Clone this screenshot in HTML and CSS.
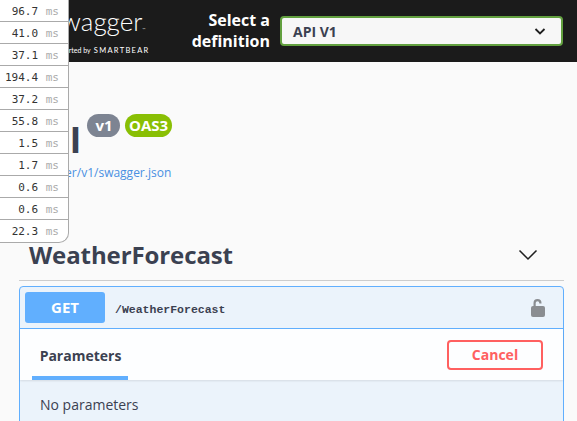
FILE: index.html
```html
<!DOCTYPE html>
<html lang="en">
<head>
<meta charset="utf-8">
<title>Swagger UI</title>
<link rel="stylesheet" href="styles.css">
</head>
<body>
<header class="topbar">
  <div class="brand">
    <div class="brand-name">swagger<span class="tm">™</span></div>
    <div class="brand-sub"><span class="by">supported by</span> SMARTBEAR</div>
  </div>
  <label class="picker">
    <span class="picker-label">Select a definition</span>
    <span class="select">
      <span>API V1</span>
      <svg class="select-arrow" width="14" height="9" viewBox="0 0 14 9"><path d="M2.500 2l4.500 4.500 4.500-4.500" fill="none" stroke="#1f1f1f" stroke-width="1.800"/></svg>
    </span>
  </label>
</header>
<main class="page">
  <section class="info">
    <div class="title-row">
      <h1 class="title">API</h1>
      <span class="badge badge-ver">v1</span>
      <span class="badge badge-oas">OAS3</span>
    </div>
    <a class="spec-link">/swagger/v1/swagger.json</a>
  </section>
  <section class="tag">
    <h2 class="tag-name">WeatherForecast</h2>
    <svg class="tag-arrow" width="20" height="12" viewBox="0 0 20 12"><path d="M1.500 1.500l8.500 8.500 8.500-8.500" fill="none" stroke="#1f1f1f" stroke-width="1.500"/></svg>
  </section>
  <section class="op">
    <div class="op-head">
      <span class="method">GET</span>
      <span class="path">/WeatherForecast</span>
      <svg class="lock" width="16" height="20" viewBox="0 0 16 20"><path d="M3.500 9V5a4 4 0 0 1 8 0v.5h-2.200V5a1.800 1.800 0 0 0-3.600 0v4z" fill="#8a8d91"/><rect x="1" y="8" width="14" height="11" rx="2" fill="#8a8d91"/></svg>
    </div>
    <div class="tabs">
      <span class="tab">Parameters</span>
      <button class="cancel">Cancel</button>
    </div>
    <div class="op-body">No parameters</div>
  </section>
</main>
<aside class="timings">
  <div class="t-row">96.7 <span class="unit">ms</span></div>
  <div class="t-row">41.0 <span class="unit">ms</span></div>
  <div class="t-row">37.1 <span class="unit">ms</span></div>
  <div class="t-row">194.4 <span class="unit">ms</span></div>
  <div class="t-row">37.2 <span class="unit">ms</span></div>
  <div class="t-row">55.8 <span class="unit">ms</span></div>
  <div class="t-row">1.5 <span class="unit">ms</span></div>
  <div class="t-row">1.7 <span class="unit">ms</span></div>
  <div class="t-row">0.6 <span class="unit">ms</span></div>
  <div class="t-row">0.6 <span class="unit">ms</span></div>
  <div class="t-row">22.3 <span class="unit">ms</span></div>
</aside>
</body>
</html>
```

FILE: styles.css
```css
* { box-sizing: border-box; }
html, body { margin: 0; height: 100%; overflow: hidden; }
body { background: #fafafa; font-family: "Open Sans", sans-serif; color: #3b4151; }

.topbar { height: 62px; background: #1b1b1b; display: flex; align-items: center; padding: 0 14px 0 50px; justify-content: space-between; }
.brand { color: #fff; margin-top: 3px; }
.brand-name { font-size: 26px; line-height: 24px; font-family: "Lato", sans-serif; font-weight: 300; }
.tm { font-size: 4px; }
.brand-sub { margin-top: 3px; font-size: 7.500px; line-height: 10px; letter-spacing: 1.300px; font-family: "Lato", sans-serif; white-space: nowrap; }
.by { letter-spacing: 0; font-size: 7px; }
.picker { display: flex; align-items: center; gap: 10px; }
.picker-label { width: 80px; text-align: right; font-size: 16px; line-height: 21px; font-weight: 700; color: #fff; }
.select { width: 283px; height: 30px; background: #f7f7f7; border: 2px solid #62a03f; border-radius: 4px; display: flex; align-items: center; justify-content: space-between; padding: 0 14px 0 11px; font-size: 14px; font-weight: 700; color: #3b4151; }
.select-arrow { display: block; }

.page { padding: 0 13px 0 19px; }
.info { padding: 52px 0 0 3px; }
.title-row { display: flex; align-items: flex-start; height: 50px; gap: 5px; }
.title { margin: 1px 1px 0 0; font-size: 36px; line-height: 49px; font-weight: 700; color: #3b4151; }
.badge { height: 23px; border-radius: 12px; color: #fff; font-size: 15px; line-height: 23px; font-weight: 700; padding: 0 8px; }
.badge-ver { background: #7d8492; }
.badge-oas { background: #89bf04; padding: 0 3.500px; }
.spec-link { display: block; margin-left: 4px; font-size: 12px; line-height: 18px; color: #4990e2; }

.tag { margin-top: 48px; height: 51px; display: flex; align-items: center; justify-content: space-between; border-bottom: 1px solid #cdcdcd; padding: 0 0 0 10px; }
.tag-name { margin: 0; font-size: 24px; font-weight: 700; line-height: 32px; letter-spacing: -0.100px; color: #3b4151; }
.tag-arrow { margin-right: 26px; }

.op { margin-top: 5px; border: 1px solid #61affe; border-radius: 4px 4px 0 0; background: #ebf3fb; }
.op-head { height: 42px; display: flex; align-items: center; padding: 0 5px; border-bottom: 1px solid #61affe; }
.method { width: 80px; height: 31px; background: #61affe; border-radius: 3px; color: #fff; text-align: center; font-size: 15px; line-height: 31px; font-weight: 700; }
.path { margin: 3px 0 0 10px; font-family: "Liberation Mono", monospace; font-size: 11.500px; font-weight: 700; color: #3b4151; flex: 1; }
.lock { margin-right: 12px; }
.tabs { height: 51px; background: rgba(255,255,255,.88); display: flex; align-items: center; justify-content: space-between; padding: 0 20px 0 12px; box-shadow: 0 1px 2px rgba(0,0,0,.1); position: relative; }
.tab { align-self: stretch; width: 96px; padding-left: 1px; text-align: center; font-size: 14px; line-height: 53px; font-weight: 700; border-bottom: 4px solid #61affe; }
.cancel { width: 96px; height: 30px; background: transparent; border: 2px solid #ff6060; border-radius: 4px; color: #ff6060; font-family: "Open Sans", sans-serif; font-size: 14px; font-weight: 700; padding: 0; }
.op-body { height: 60px; padding: 15px 20px; font-size: 14px; line-height: 19px; color: #3b4151; }

.timings { position: absolute; left: 0; top: 0; width: 69px; background: #fff; border-right: 1px solid #aaa; border-bottom: 1px solid #aaa; border-bottom-right-radius: 10px; font-family: "DejaVu Sans Mono", monospace; font-size: 11px; color: #333; }
.t-row { height: 22px; line-height: 23px; text-align: right; padding-right: 9px; border-bottom: 1px solid #aaa; white-space: nowrap; }
.t-row:last-child { border-bottom: 0; }
.unit { color: #aaa; margin-left: 1px; }
```
